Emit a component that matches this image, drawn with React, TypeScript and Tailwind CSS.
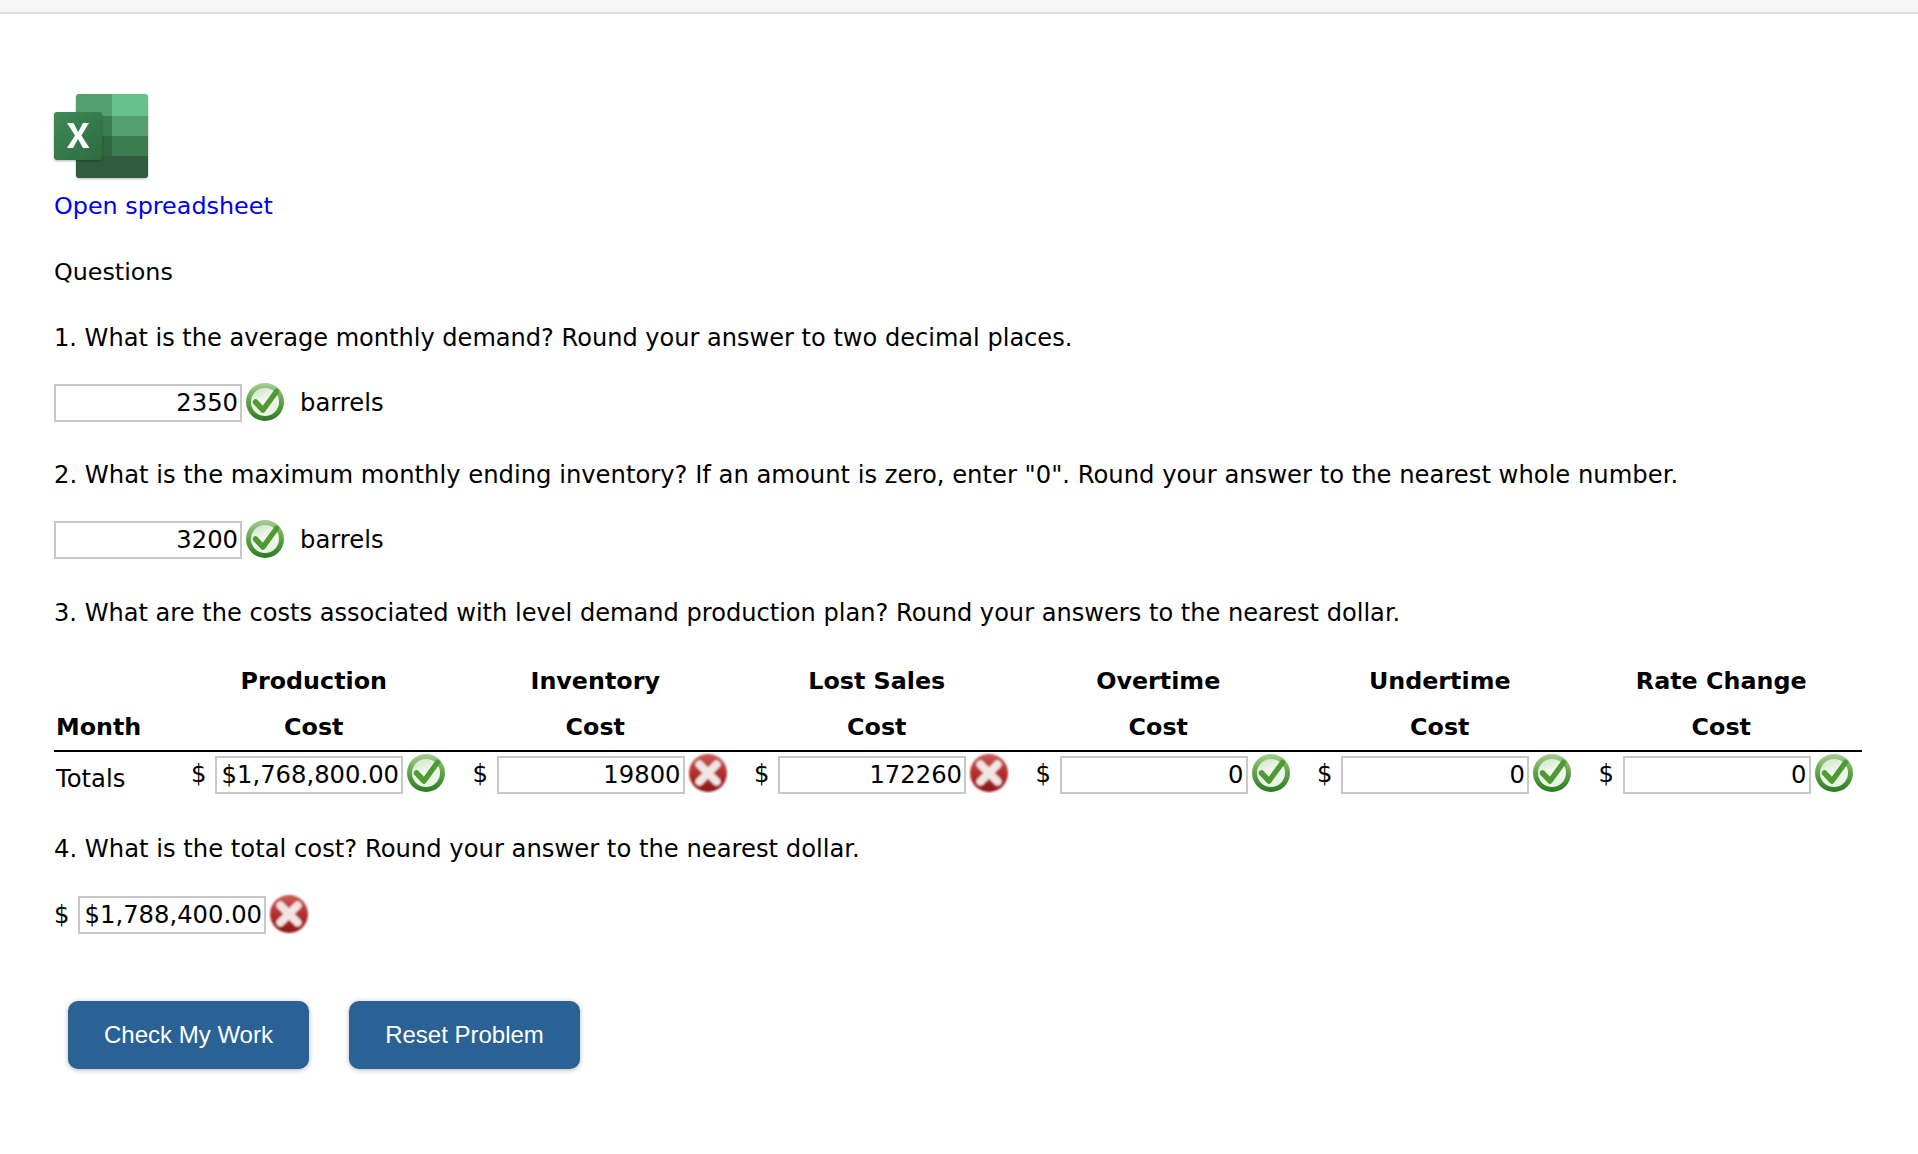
import React from "react";

const font = "font-['DejaVu_Sans','Liberation_Sans',sans-serif]";

function Check() {
  return (
    <svg width="40" height="40" viewBox="0 0 40 40" className="shrink-0">
      <defs>
        <linearGradient id="ringG" x1="0" y1="0" x2="0" y2="1">
          <stop offset="0" stopColor="#a9cf98" />
          <stop offset="0.35" stopColor="#6fae55" />
          <stop offset="1" stopColor="#2c7a22" />
        </linearGradient>
        <linearGradient id="innerG" x1="0.2" y1="0" x2="0.6" y2="1">
          <stop offset="0" stopColor="#cfe6c8" />
          <stop offset="0.5" stopColor="#f4f9f1" />
          <stop offset="1" stopColor="#e6f2e0" />
        </linearGradient>
        <filter id="softC" x="-10%" y="-10%" width="120%" height="120%">
          <feGaussianBlur stdDeviation="0.6" />
        </filter>
      </defs>
      <g filter="url(#softC)">
        <circle cx="20" cy="20" r="19" fill="url(#ringG)" />
        <circle cx="20" cy="20" r="14" fill="url(#innerG)" />
        <path d="M10.5 20 L18 28 L31.5 9.5" fill="none" stroke="#4f9a33" strokeWidth="5.5" strokeLinejoin="round" strokeLinecap="round" />
      </g>
    </svg>
  );
}

function Cross() {
  return (
    <svg width="40" height="40" viewBox="0 0 40 40" className="shrink-0">
      <defs>
        <linearGradient id="redG" x1="0" y1="0" x2="0" y2="1">
          <stop offset="0" stopColor="#cc5a58" />
          <stop offset="0.5" stopColor="#b42f2d" />
          <stop offset="1" stopColor="#8c1614" />
        </linearGradient>
        <filter id="softX" x="-10%" y="-10%" width="120%" height="120%">
          <feGaussianBlur stdDeviation="0.8" />
        </filter>
      </defs>
      <g filter="url(#softX)">
        <circle cx="20" cy="20" r="19" fill="url(#redG)" />
        <path d="M11.5 11.5 L28.5 28.5 M28.5 11.5 L11.5 28.5" fill="none" stroke="#f1e6e4" strokeWidth="8" strokeLinecap="round" />
      </g>
    </svg>
  );
}

function ExcelIcon() {
  return (
    <svg width="96" height="86" viewBox="0 0 96 86" className="block" style={{ overflow: "visible" }}>
      <defs>
        <linearGradient id="xG" x1="0" y1="0" x2="1" y2="1">
          <stop offset="0" stopColor="#3f8a58" />
          <stop offset="1" stopColor="#2c6b3f" />
        </linearGradient>
        <filter id="sh" x="-20%" y="-20%" width="140%" height="140%">
          <feDropShadow dx="0" dy="1" stdDeviation="1" floodColor="#000" floodOpacity="0.3" />
        </filter>
        <clipPath id="sheet">
          <rect x="22" y="0" width="72" height="84" rx="3" />
        </clipPath>
      </defs>
      <g filter="url(#sh)">
        <g clipPath="url(#sheet)">
          <rect x="22" y="0" width="36" height="22" fill="#53a06e" />
          <rect x="58" y="0" width="36" height="22" fill="#66c28a" />
          <rect x="22" y="22" width="36" height="20" fill="#3a7d4f" />
          <rect x="58" y="22" width="36" height="20" fill="#53a06e" />
          <rect x="22" y="42" width="36" height="20" fill="#2d6640" />
          <rect x="58" y="42" width="36" height="20" fill="#3a7d4f" />
          <rect x="22" y="62" width="72" height="22" fill="#2d5c3c" />
        </g>
      </g>
      <rect x="0" y="18" width="48" height="48" rx="3" fill="url(#xG)" filter="url(#sh)" />
      <path d="M13 29 L19.5 29 L24.2 38 L29 29 L35 29 L27.4 41.5 L35.4 54 L29 54 L24 45 L19 54 L13 54 L21 41.5 Z" fill="#fff" />
    </svg>
  );
}

function Field({ value }: { value: string }) {
  return (
    <span className="w-[188px] h-[38px] border-2 border-[#c8c8c8] bg-white text-right pr-[2px] leading-[34px] whitespace-nowrap block shrink-0">{value}</span>
  );
}

function Cell({ value, ok }: { value: string; ok: boolean }) {
  return (
    <td className="p-0">
      <div className="flex items-center pl-[18px] -mt-[4px]">
        <span className="w-[24px] shrink-0">$</span>
        <Field value={value} />
        <span className="ml-[3px] -mt-[3px]">{ok ? <Check /> : <Cross />}</span>
      </div>
    </td>
  );
}

const heads = ["Production", "Inventory", "Lost Sales", "Overtime", "Undertime", "Rate Change"];

export default function App() {
  return (
    <div className={`${font} min-h-[1154px] bg-white text-[24.25px] text-black`}>
      <div className="h-[14px] bg-[#f6f6f6] border-b-2 border-[#dedede]" />
      <div className="pl-[54px] pr-[56px]">
        <div className="pt-[80px]"><ExcelIcon /></div>
        <a className="block mt-[12px] leading-[28px] text-[23.85px] text-[#0000ee]">Open spreadsheet</a>
        <p className="mt-[38px] leading-[28px] text-[23.8px]">Questions</p>
        <p className="mt-[38px] leading-[28px] text-[24.07px]">1. What is the average monthly demand? Round your answer to two decimal places.</p>
        <div className="mt-[31px] flex items-center h-[40px]">
          <Field value="2350" />
          <span className="ml-[3px] -mt-[3px]"><Check /></span>
          <span className="ml-[15px]">barrels</span>
        </div>
        <p className="mt-[38px] leading-[28px]">2. What is the maximum monthly ending inventory? If an amount is zero, enter "0". Round your answer to the nearest whole number.</p>
        <div className="mt-[31px] flex items-center h-[40px]">
          <Field value="3200" />
          <span className="ml-[3px] -mt-[3px]"><Check /></span>
          <span className="ml-[15px]">barrels</span>
        </div>
        <p className="mt-[39px] leading-[28px] text-[24.1px]">3. What are the costs associated with level demand production plan? Round your answers to the nearest dollar.</p>
        <table className="mt-[32px] w-[1808px] table-fixed border-collapse">
          <colgroup>
            <col className="w-[119px]" />
            {heads.map((h) => <col key={h} className="w-[281.5px]" />)}
          </colgroup>
          <thead className="text-[23.8px]">
            <tr className="h-[46px]">
              <th />
              {heads.map((h) => <th key={h} className="font-bold text-center">{h}</th>)}
            </tr>
            <tr className="h-[46px] border-b-2 border-black">
              <th className="text-left font-bold pl-[2px]">Month</th>
              {heads.map((h) => <th key={h} className="font-bold text-center">Cost</th>)}
            </tr>
          </thead>
          <tbody>
            <tr className="h-[50px]">
              <td className="p-0 pl-[2px] pt-[6px]">Totals</td>
              <Cell value="$1,768,800.00" ok />
              <Cell value="19800" ok={false} />
              <Cell value="172260" ok={false} />
              <Cell value="0" ok />
              <Cell value="0" ok />
              <Cell value="0" ok />
            </tr>
          </tbody>
        </table>
        <p className="mt-[34px] leading-[28px]">4. What is the total cost? Round your answer to the nearest dollar.</p>
        <div className="mt-[32px] flex items-center h-[40px]">
          <span className="w-[24px] shrink-0">$</span>
          <Field value="$1,788,400.00" />
          <span className="ml-[3px] -mt-[3px]"><Cross /></span>
        </div>
        <div className="mt-[66px] ml-[14px] flex gap-[40px] font-['Liberation_Sans',sans-serif] text-[24px]">
          <button className="w-[241px] h-[68px] rounded-[10px] bg-[#2a6295] text-white shadow-[0_1px_5px_rgba(0,0,0,0.3)]">Check My Work</button>
          <button className="w-[231px] h-[68px] rounded-[10px] bg-[#2a6295] text-white shadow-[0_1px_5px_rgba(0,0,0,0.3)]">Reset Problem</button>
        </div>
      </div>
    </div>
  );
}
